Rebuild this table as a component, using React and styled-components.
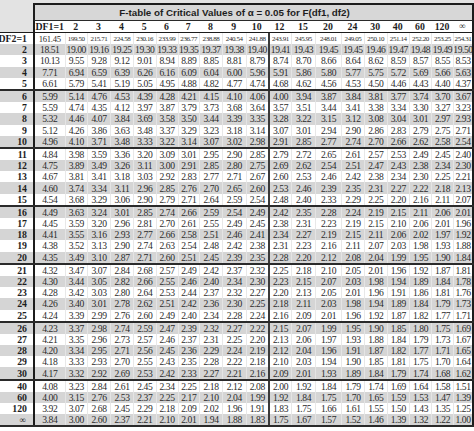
import React from "react";
import styled, { createGlobalStyle } from "styled-components";

const Global = createGlobalStyle`
  html, body { margin: 0; padding: 0; background: #ffffff; }
  * { box-sizing: border-box; }
`;

const COL_WIDTHS = [33, 31.5, 22.5, 23, 23, 22.5, 22, 21.5, 23, 23.5, 22.5, 23, 24, 26, 23, 22.5, 22.5, 22, 22, 21];
const GRID = COL_WIDTHS.map((w) => `${w}px`).join(" ");

const DF1 = ["DF1=1", "2", "3", "4", "5", "6", "7", "8", "9", "10", "12", "15", "20", "24", "30", "40", "60", "120", "∞"];

const RAW = `1|161.45 199.50 215.71 224.58 230.16 233.99 236.77 238.88 240.54 241.88 243.91 245.95 248.01 249.05 250.10 251.14 252.20 253.25 254.31
2|18.51 19.00 19.16 19.25 19.30 19.33 19.35 19.37 19.38 19.40 19.41 19.43 19.45 19.45 19.46 19.47 19.48 19.49 19.50
3|10.13 9.55 9.28 9.12 9.01 8.94 8.89 8.85 8.81 8.79 8.74 8.70 8.66 8.64 8.62 8.59 8.57 8.55 8.53
4|7.71 6.94 6.59 6.39 6.26 6.16 6.09 6.04 6.00 5.96 5.91 5.86 5.80 5.77 5.75 5.72 5.69 5.66 5.63
5|6.61 5.79 5.41 5.19 5.05 4.95 4.88 4.82 4.77 4.74 4.68 4.62 4.56 4.53 4.50 4.46 4.43 4.40 4.37
6|5.99 5.14 4.76 4.53 4.39 4.28 4.21 4.15 4.10 4.06 4.00 3.94 3.87 3.84 3.81 3.77 3.74 3.70 3.67
7|5.59 4.74 4.35 4.12 3.97 3.87 3.79 3.73 3.68 3.64 3.57 3.51 3.44 3.41 3.38 3.34 3.30 3.27 3.23
8|5.32 4.46 4.07 3.84 3.69 3.58 3.50 3.44 3.39 3.35 3.28 3.22 3.15 3.12 3.08 3.04 3.01 2.97 2.93
9|5.12 4.26 3.86 3.63 3.48 3.37 3.29 3.23 3.18 3.14 3.07 3.01 2.94 2.90 2.86 2.83 2.79 2.75 2.71
10|4.96 4.10 3.71 3.48 3.33 3.22 3.14 3.07 3.02 2.98 2.91 2.85 2.77 2.74 2.70 2.66 2.62 2.58 2.54
11|4.84 3.98 3.59 3.36 3.20 3.09 3.01 2.95 2.90 2.85 2.79 2.72 2.65 2.61 2.57 2.53 2.49 2.45 2.40
12|4.75 3.89 3.49 3.26 3.11 3.00 2.91 2.85 2.80 2.75 2.69 2.62 2.54 2.51 2.47 2.43 2.38 2.34 2.30
13|4.67 3.81 3.41 3.18 3.03 2.92 2.83 2.77 2.71 2.67 2.60 2.53 2.46 2.42 2.38 2.34 2.30 2.25 2.21
14|4.60 3.74 3.34 3.11 2.96 2.85 2.76 2.70 2.65 2.60 2.53 2.46 2.39 2.35 2.31 2.27 2.22 2.18 2.13
15|4.54 3.68 3.29 3.06 2.90 2.79 2.71 2.64 2.59 2.54 2.48 2.40 2.33 2.29 2.25 2.20 2.16 2.11 2.07
16|4.49 3.63 3.24 3.01 2.85 2.74 2.66 2.59 2.54 2.49 2.42 2.35 2.28 2.24 2.19 2.15 2.11 2.06 2.01
17|4.45 3.59 3.20 2.96 2.81 2.70 2.61 2.55 2.49 2.45 2.38 2.31 2.23 2.19 2.15 2.10 2.06 2.01 1.96
18|4.41 3.55 3.16 2.93 2.77 2.66 2.58 2.51 2.46 2.41 2.34 2.27 2.19 2.15 2.11 2.06 2.02 1.97 1.92
19|4.38 3.52 3.13 2.90 2.74 2.63 2.54 2.48 2.42 2.38 2.31 2.23 2.16 2.11 2.07 2.03 1.98 1.93 1.88
20|4.35 3.49 3.10 2.87 2.71 2.60 2.51 2.45 2.39 2.35 2.28 2.20 2.12 2.08 2.04 1.99 1.95 1.90 1.84
21|4.32 3.47 3.07 2.84 2.68 2.57 2.49 2.42 2.37 2.32 2.25 2.18 2.10 2.05 2.01 1.96 1.92 1.87 1.81
22|4.30 3.44 3.05 2.82 2.66 2.55 2.46 2.40 2.34 2.30 2.23 2.15 2.07 2.03 1.98 1.94 1.89 1.84 1.78
23|4.28 3.42 3.03 2.80 2.64 2.53 2.44 2.37 2.32 2.27 2.20 2.13 2.05 2.01 1.96 1.91 1.86 1.81 1.76
24|4.26 3.40 3.01 2.78 2.62 2.51 2.42 2.36 2.30 2.25 2.18 2.11 2.03 1.98 1.94 1.89 1.84 1.79 1.73
25|4.24 3.39 2.99 2.76 2.60 2.49 2.40 2.34 2.28 2.24 2.16 2.09 2.01 1.96 1.92 1.87 1.82 1.77 1.71
26|4.23 3.37 2.98 2.74 2.59 2.47 2.39 2.32 2.27 2.22 2.15 2.07 1.99 1.95 1.90 1.85 1.80 1.75 1.69
27|4.21 3.35 2.96 2.73 2.57 2.46 2.37 2.31 2.25 2.20 2.13 2.06 1.97 1.93 1.88 1.84 1.79 1.73 1.67
28|4.20 3.34 2.95 2.71 2.56 2.45 2.36 2.29 2.24 2.19 2.12 2.04 1.96 1.91 1.87 1.82 1.77 1.71 1.65
29|4.18 3.33 2.93 2.70 2.55 2.43 2.35 2.28 2.22 2.18 2.10 2.03 1.94 1.90 1.85 1.81 1.75 1.70 1.64
30|4.17 3.32 2.92 2.69 2.53 2.42 2.33 2.27 2.21 2.16 2.09 2.01 1.93 1.89 1.84 1.79 1.74 1.68 1.62
40|4.08 3.23 2.84 2.61 2.45 2.34 2.25 2.18 2.12 2.08 2.00 1.92 1.84 1.79 1.74 1.69 1.64 1.58 1.51
60|4.00 3.15 2.76 2.53 2.37 2.25 2.17 2.10 2.04 1.99 1.92 1.84 1.75 1.70 1.65 1.59 1.53 1.47 1.39
120|3.92 3.07 2.68 2.45 2.29 2.18 2.09 2.02 1.96 1.91 1.83 1.75 1.66 1.61 1.55 1.50 1.43 1.35 1.25
∞|3.84 3.00 2.60 2.37 2.21 2.10 2.01 1.94 1.88 1.83 1.75 1.67 1.57 1.52 1.46 1.39 1.32 1.22 1.00`;

const ROWS = RAW.split("\n").map((line) => {
  const [label, vals] = line.split("|");
  return { label, values: vals.trim().split(/\s+/) };
});

const ROW_H = 11.2;
const GROUP_STARTS = new Set([5, 10, 15, 20, 25, 30]);

const Table = styled.div`
  width: 474px;
  display: flex;
  flex-direction: column;
`;

const TitleRow = styled.div`
  display: grid;
  grid-template-columns: 33px 1fr;
  height: 20.5px;
  background: #e3e3e3;
`;

const Corner = styled.div`
  background: #e3e3e3;
`;

const Title = styled.div`
  margin-top: 3px;
  display: flex;
  align-items: center;
  justify-content: center;
  padding-right: 38px;
  background: #d7d7d7;
  border-top: 2px solid #1c1c1c;
  border-left: 2px solid #1c1c1c;
  border-right: 2px solid #1c1c1c;
  border-bottom: 1px solid #2a2a2a;
  font-family: "Liberation Sans", Arial, sans-serif;
  font-weight: 700;
  font-size: 9.8px;
  color: #1e1e1e;
  white-space: nowrap;
`;

const HeaderRow = styled.div`
  display: grid;
  grid-template-columns: ${GRID};
  height: 12.5px;
  background: #ffffff;
  border-bottom: 1px solid #1c1c1c;
`;

const HeadCorner = styled.div`
  background: #e3e3e3;
`;

const HeadCell = styled.div`
  display: flex;
  align-items: center;
  justify-content: center;
  font-family: "Liberation Serif", "Times New Roman", serif;
  font-weight: 700;
  font-size: ${(p) => (p.$symbol ? 9 : 9.8)}px;
  color: #1e1e1e;
  white-space: nowrap;
  border-left: ${(p) => (p.$edge ? "2px solid #1c1c1c" : "none")};
  border-right: ${(p) => (p.$last ? "2px solid #1c1c1c" : "none")};
`;

const Row = styled.div`
  display: grid;
  grid-template-columns: ${GRID};
  height: ${(p) => ROW_H + (p.$groupStart ? 2 : 0) + (p.$end ? 2 : 0)}px;
  background: ${(p) => (p.$shade ? "#d5d5d5" : "#ffffff")};
  border-top: ${(p) => (p.$groupStart ? "2px solid #2a2a2a" : "none")};
  border-bottom: ${(p) => (p.$end ? "2px solid #2a2a2a" : "none")};
`;

const Label = styled.div`
  display: flex;
  align-items: center;
  justify-content: flex-end;
  padding-right: ${(p) => (p.$symbol ? 7 : 6)}px;
  font-family: "Liberation Serif", "Times New Roman", serif;
  font-weight: ${(p) => (p.$symbol ? 400 : 700)};
  font-size: ${(p) => (p.$symbol ? 9 : 9.8)}px;
  color: #1e1e1e;
  white-space: nowrap;
`;

const Cell = styled.div`
  display: flex;
  align-items: center;
  justify-content: center;
  font-family: "Liberation Serif", "Times New Roman", serif;
  font-size: ${(p) => p.$size}px;
  letter-spacing: ${(p) => p.$track}px;
  color: #2b2b2b;
  white-space: nowrap;
  overflow: hidden;
  border-left: ${(p) =>
    p.$edge ? `2px solid ${p.$edge}` : `1px solid ${p.$shade ? "#e4e4e4" : "#e8e8e8"}`};
  border-right: ${(p) => (p.$last ? "2px solid #1c1c1c" : "none")};
`;

function cellStyle(rowIdx, colIdx) {
  if (rowIdx === 0) return colIdx === 0 ? { size: 8.6, track: -0.3 } : { size: 7, track: -0.4 };
  return { size: 9.6, track: -0.45 };
}

function edgeFor(colIdx) {
  if (colIdx === 0) return "#1c1c1c";
  if (colIdx === 10) return "#3a3a3a";
  return null;
}

export default function App() {
  return (
    <>
      <Global />
      <Table>
        <TitleRow>
          <Corner />
          <Title>F-table of Critical Values of α = 0.05 for F(df1, df2)</Title>
        </TitleRow>
        <HeaderRow>
          <HeadCorner />
          {DF1.map((c, i) => (
            <HeadCell key={c} $edge={i === 0} $last={i === DF1.length - 1} $symbol={c === "∞"}>
              {c}
            </HeadCell>
          ))}
        </HeaderRow>
        {ROWS.map((r, ri) => {
          const shade = ri % 2 === 1;
          return (
            <Row
              key={r.label}
              $shade={shade}
              $groupStart={GROUP_STARTS.has(ri)}
              $end={ri === ROWS.length - 1}
            >
              <Label $symbol={r.label === "∞"}>{ri === 0 ? "DF2=1" : r.label}</Label>
              {r.values.map((v, ci) => {
                const s = cellStyle(ri, ci);
                return (
                  <Cell
                    key={ci}
                    $size={s.size}
                    $track={s.track}
                    $shade={shade}
                    $edge={edgeFor(ci)}
                    $last={ci === r.values.length - 1}
                  >
                    {v}
                  </Cell>
                );
              })}
            </Row>
          );
        })}
      </Table>
    </>
  );
}
